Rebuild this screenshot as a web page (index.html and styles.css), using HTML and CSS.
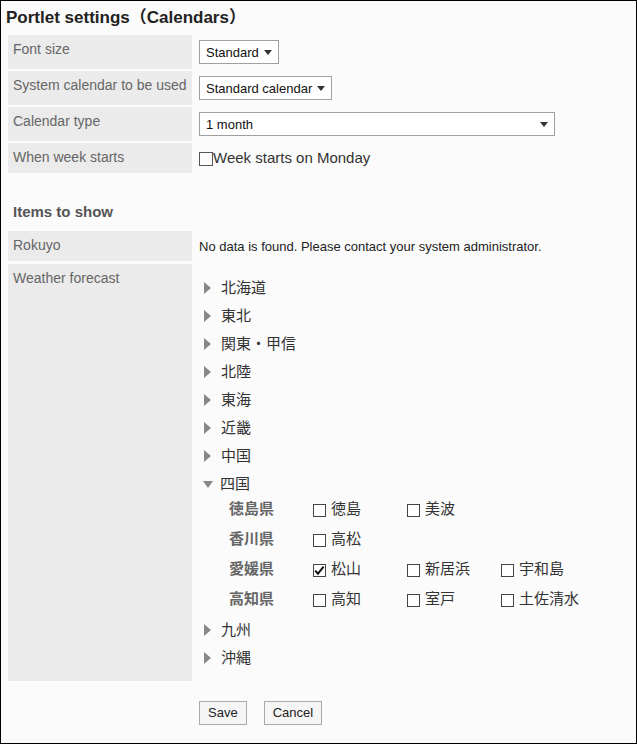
FILE: index.html
```html
<!DOCTYPE html>
<html lang="ja">
<head>
<meta charset="utf-8">
<title>Portlet settings</title>
<link rel="stylesheet" href="styles.css">
</head>
<body>
<div class="frame">
  <h1 class="title">Portlet settings（Calendars）</h1>

  <div class="form form-top">
    <div class="label">Font size</div>
    <div class="value"><span class="select">Standard<i class="caret"></i></span></div>

    <div class="label">System calendar to be used</div>
    <div class="value"><span class="select">Standard calendar<i class="caret"></i></span></div>

    <div class="label">Calendar type</div>
    <div class="value"><span class="select select-wide">1 month<i class="caret"></i></span></div>

    <div class="label">When week starts</div>
    <div class="value value-check"><label class="week"><span class="box box-week"></span>Week starts on Monday</label></div>
  </div>

  <h2 class="section">Items to show</h2>

  <div class="form form-items">
    <div class="label">Rokuyo</div>
    <div class="value value-text">No data is found. Please contact your system administrator.</div>

    <div class="label">Weather forecast</div>
    <div class="value value-tree">
      <ul class="tree">
        <li class="node"><span class="tri tri-right"></span>北海道</li>
        <li class="node"><span class="tri tri-right"></span>東北</li>
        <li class="node"><span class="tri tri-right"></span>関東・甲信</li>
        <li class="node"><span class="tri tri-right"></span>北陸</li>
        <li class="node"><span class="tri tri-right"></span>東海</li>
        <li class="node"><span class="tri tri-right"></span>近畿</li>
        <li class="node"><span class="tri tri-right"></span>中国</li>
        <li class="node"><span class="tri tri-down"></span>四国</li>
        <li class="sub">
          <div class="pref">徳島県</div>
          <label class="city"><span class="box"></span>徳島</label>
          <label class="city"><span class="box"></span>美波</label>
          <span></span>

          <div class="pref">香川県</div>
          <label class="city"><span class="box"></span>高松</label>
          <span></span>
          <span></span>

          <div class="pref">愛媛県</div>
          <label class="city"><span class="box box-checked"><svg viewBox="0 0 13 13" width="13" height="13"><path d="M2.2 6.6 L5 9.6 L10.6 2.6" fill="none" stroke="#111" stroke-width="2"/></svg></span>松山</label>
          <label class="city"><span class="box"></span>新居浜</label>
          <label class="city"><span class="box"></span>宇和島</label>

          <div class="pref">高知県</div>
          <label class="city"><span class="box"></span>高知</label>
          <label class="city"><span class="box"></span>室戸</label>
          <label class="city"><span class="box"></span>土佐清水</label>
        </li>
        <li class="node node-after"><span class="tri tri-right"></span>九州</li>
        <li class="node"><span class="tri tri-right"></span>沖縄</li>
      </ul>
    </div>
  </div>

  <div class="form form-actions">
    <div class="spacer"></div>
    <div class="buttons">
      <button class="btn" type="button">Save</button>
      <button class="btn" type="button">Cancel</button>
    </div>
  </div>
</div>
</body>
</html>
```

FILE: styles.css
```css
html, body {
  margin: 0;
  padding: 0;
  background: #fbfbfb;
}

body {
  font-family: "Liberation Sans", "Noto Sans CJK JP", sans-serif;
  color: #222;
}

.frame {
  box-sizing: border-box;
  width: 637px;
  height: 744px;
  border: 1px solid #000;
  background: #fbfbfb;
  overflow: hidden;
}

.title {
  margin: 0;
  padding: 7px 0 0 5px;
  font-size: 17px;
  line-height: 20px;
  font-weight: bold;
  color: #222;
}

.form {
  display: grid;
  grid-template-columns: 184px 1fr;
  margin-left: 7px;
}

.form-top {
  margin-top: 7px;
  row-gap: 2px;
  grid-auto-rows: auto;
}

.form-items {
  row-gap: 3px;
}

.label {
  background: #ebebeb;
  padding: 6px 4px 7px 5px;
  font-size: 14px;
  line-height: 17px;
  color: #666;
}

.value {
  padding: 5px 0 5px 7px;
}

.select {
  box-sizing: border-box;
  display: inline-flex;
  align-items: center;
  justify-content: space-between;
  gap: 5px;
  height: 24px;
  padding: 0 6px;
  border: 1px solid #a0a0a0;
  background: #fff;
  font-size: 13px;
  color: #111;
  vertical-align: top;
}

.select-wide {
  width: 356px;
}

.caret {
  display: inline-block;
  width: 0;
  height: 0;
  border-left: 4px solid transparent;
  border-right: 4px solid transparent;
  border-top: 5px solid #333;
  margin-top: 1px;
}

.value-check {
  padding: 6px 0 7px 7px;
  font-size: 15px;
  line-height: 17px;
  color: #333;
}

.week {
  white-space: nowrap;
}

.box {
  box-sizing: border-box;
  display: inline-block;
  width: 13px;
  height: 13px;
  border: 1px solid #444;
  background: #fff;
  flex: none;
  position: relative;
}

.box svg {
  position: absolute;
  left: -1px;
  top: -1px;
}

.box-week {
  width: 14px;
  height: 14px;
  border-color: #555;
  background: transparent;
  vertical-align: -3px;
}

.section {
  margin: 30px 0 11px 12px;
  font-size: 15px;
  line-height: 17px;
  font-weight: bold;
  color: #555;
}

.value-text {
  padding: 7px 0 0 7px;
  font-size: 13px;
  line-height: 17px;
  color: #222;
}

.value-tree {
  padding: 10px 0 9px 7px;
}

.tree {
  list-style: none;
  margin: 0;
  padding: 0;
  font-size: 15px;
  color: #333;
}

.node {
  display: flex;
  align-items: center;
  height: 28px;
  line-height: 28px;
}

.node-after {
  margin-top: 2px;
}

.tri {
  display: inline-block;
  width: 0;
  height: 0;
  margin-right: 10px;
}

.tri-right {
  margin-left: 5px;
  border-top: 6px solid transparent;
  border-bottom: 6px solid transparent;
  border-left: 7px solid #888;
  margin-right: 10px;
}

.tri-down {
  margin-left: 4px;
  border-left: 5.5px solid transparent;
  border-right: 5.5px solid transparent;
  border-top: 7px solid #888;
  margin-right: 7px;
}

.sub {
  display: grid;
  grid-template-columns: 84px 94px 94px 94px;
  grid-auto-rows: 30px;
  align-items: center;
  margin: -4px 0 0 30px;
}

.pref {
  font-weight: bold;
  color: #666;
  line-height: 20px;
}

.city {
  display: inline-flex;
  align-items: center;
  gap: 5px;
  line-height: 20px;
  white-space: nowrap;
}

.city .box {
  margin-top: 3px;
}

.form-actions {
  margin-top: 20px;
}

.buttons {
  padding-left: 7px;
  display: flex;
  gap: 17px;
}

.btn {
  box-sizing: border-box;
  height: 24px;
  padding: 0 8px;
  border: 1px solid #aaa;
  border-radius: 0;
  background: #f5f5f5;
  font-family: "Liberation Sans", sans-serif;
  font-size: 13px;
  color: #222;
  line-height: 22px;
}
```
